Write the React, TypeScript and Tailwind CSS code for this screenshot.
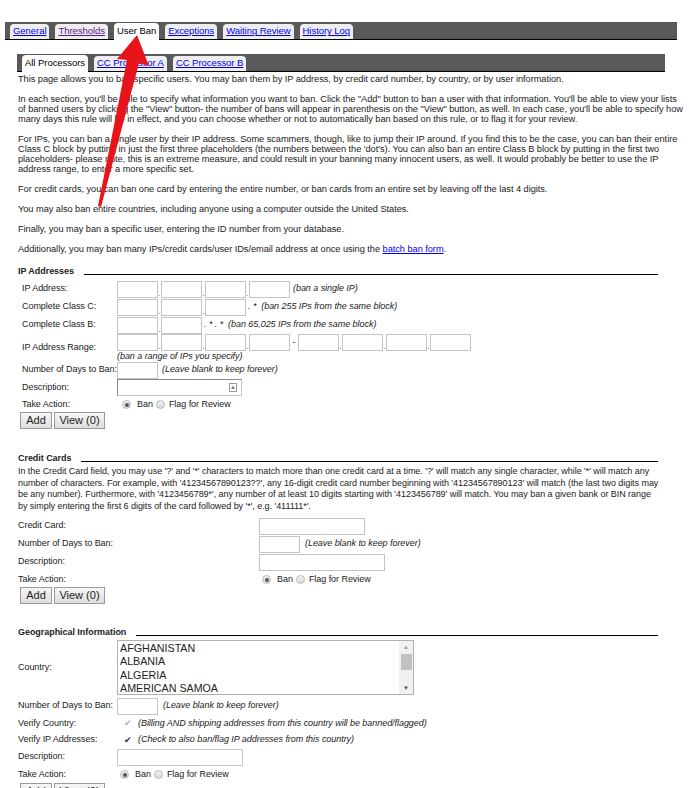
import React from 'react';

const FONT = { fontFamily: '"Liberation Sans", Arial, sans-serif' };

function Tab({ label, active, visited }: { label: string; active?: boolean; visited?: boolean }) {
  if (active) {
    return (
      <div className="h-[17px] -mb-px px-[3px] bg-white rounded-t-[4px] flex items-center text-[9.5px] text-black z-10">
        {label}
      </div>
    );
  }
  return (
    <div className="h-[15px] mt-[2px] px-[3px] bg-[#eeeeee] rounded-t-[4px] flex items-center text-[9.5px]">
      <span className={visited ? 'underline text-[#551a8b]' : 'underline text-[#0000ee]'}>{label}</span>
    </div>
  );
}

function Radio({ checked }: { checked?: boolean }) {
  return (
    <span className="inline-flex w-[9px] h-[9px] rounded-full border border-[#b8b8b8] bg-gradient-to-b from-[#f2f2f2] to-[#d8d8d8] items-center justify-center">
      {checked && <span className="w-[4px] h-[4px] rounded-full bg-[#555]" />}
    </span>
  );
}

function Check({ disabled }: { disabled?: boolean }) {
  return (
    <span
      className={`inline-flex w-[10px] h-[10px] items-center justify-center text-[9px] leading-none ${
        disabled ? 'text-[#b5b5b5]' : 'text-[#333]'
      }`}
    >
      ✔
    </span>
  );
}

function Box({ w, h = 17 }: { w: number; h?: number }) {
  return <span className="inline-block border border-[#c4c4c4] bg-white shrink-0" style={{ width: w, height: h }} />;
}

function Dot() {
  return <span className="w-[3px] text-center text-[7px] leading-none self-end mb-[1px]">.</span>;
}

function SectionHead({ title }: { title: string }) {
  return (
    <div className="flex items-end h-[11px] pr-[25px]">
      <span className="text-[9px] font-bold text-[#222] pr-[10px] leading-none">{title}</span>
      <div className="flex-1 border-b border-black mb-[1px]" />
    </div>
  );
}

function ActionRow({ label, labelW, gap }: { label: string; labelW: number; gap: number }) {
  return (
    <div className="flex items-center h-[17px]">
      <span className="shrink-0" style={{ width: labelW }}>{label}</span>
      <span className="flex items-center" style={{ marginLeft: gap }}>
        <Radio checked />
        <span className="ml-[6px] mr-[3px]">Ban</span>
        <Radio />
        <span className="ml-[4px]">Flag for Review</span>
      </span>
    </div>
  );
}

function Buttons() {
  return (
    <div className="flex gap-[2px] h-[17px]">
      <span className="w-[32px] border border-[#9a9a9a] bg-gradient-to-b from-[#f6f6f6] to-[#dedede] flex items-center justify-center text-[11px] tracking-normal text-[#222]">
        Add
      </span>
      <span className="w-[51px] border border-[#9a9a9a] bg-gradient-to-b from-[#f6f6f6] to-[#dedede] flex items-center justify-center text-[11px] tracking-normal text-[#222]">
        View (0)
      </span>
    </div>
  );
}

function IpGroup({ n }: { n: number }) {
  const boxes = [];
  for (let i = 0; i < n; i++) {
    boxes.push(<Box key={`b${i}`} w={41} />);
    if (i < n - 1) boxes.push(<Dot key={`d${i}`} />);
  }
  return <>{boxes}</>;
}

function IpSection() {
  return (
    <div className="mt-[11px]">
      <SectionHead title="IP Addresses" />
      <div className="pl-[4px] mt-[4px] whitespace-nowrap">
        <div className="flex items-center h-[18px]">
          <span className="w-[95px] shrink-0">IP Address:</span>
          <IpGroup n={4} />
          <span className="ml-[3px] italic">(ban a single IP)</span>
        </div>
        <div className="flex items-center h-[18px]">
          <span className="w-[95px] shrink-0">Complete Class C:</span>
          <IpGroup n={3} />
          <span className="ml-[2px] italic">. *&nbsp; (ban 255 IPs from the same block)</span>
        </div>
        <div className="flex items-center h-[18px]">
          <span className="w-[95px] shrink-0">Complete Class B:</span>
          <IpGroup n={2} />
          <span className="ml-[2px] italic">. * . *&nbsp; (ban 65,025 IPs from the same block)</span>
        </div>
        <div className="flex items-center h-[27px]">
          <span className="w-[95px] shrink-0">IP Address Range:</span>
          <div className="flex flex-col">
            <div className="flex h-[17px]">
              <IpGroup n={4} />
              <span className="w-[8px] text-center self-center">-</span>
              <IpGroup n={4} />
            </div>
            <span className="italic leading-[10px]">(ban a range of IPs you specify)</span>
          </div>
        </div>
        <div className="flex items-center h-[18px]">
          <span className="w-[95px] shrink-0">Number of Days to Ban:</span>
          <Box w={41} />
          <span className="ml-[4px] italic">(Leave blank to keep forever)</span>
        </div>
        <div className="flex items-center h-[17px]">
          <span className="w-[95px] shrink-0">Description:</span>
          <span className="relative inline-block w-[125px] h-[17px] border border-[#c4c4c4] border-t-[#888] border-l-[#888] bg-white">
            <span className="absolute right-[4px] top-[3px] w-[8px] h-[9px] border border-[#999] text-[6px] leading-[7px] text-center text-[#777]">▲</span>
          </span>
        </div>
        <ActionRow label="Take Action:" labelW={95} gap={5} />
      </div>
      <div className="pl-[2px] -mt-[1px]">
        <Buttons />
      </div>
    </div>
  );
}

function CardSection() {
  return (
    <div className="mt-[23px]">
      <SectionHead title="Credit Cards" />
      <p className="mt-[3px] leading-[11.5px] pr-[24px]">
        In the Credit Card field, you may use '?' and '*' characters to match more than one credit card at a time. '?' will match any single character, while '*' will match any number of characters. For example, with '41234567890123??', any 16-digit credit card number beginning with '41234567890123' will match (the last two digits may be any number). Furthermore, with '4123456789*', any number of at least 10 digits starting with '4123456789' will match. You may ban a given bank or BIN range by simply entering the first 6 digits of the card followed by '*', e.g. '411111*'.
      </p>
      <div className="mt-[5px] whitespace-nowrap">
        <div className="flex items-center h-[18px]">
          <span className="w-[241px] shrink-0">Credit Card:</span>
          <Box w={106} />
        </div>
        <div className="flex items-center h-[18px]">
          <span className="w-[241px] shrink-0">Number of Days to Ban:</span>
          <Box w={41} />
          <span className="ml-[5px] italic">(Leave blank to keep forever)</span>
        </div>
        <div className="flex items-center h-[18px]">
          <span className="w-[241px] shrink-0">Description:</span>
          <Box w={126} />
        </div>
        <ActionRow label="Take Action:" labelW={241} gap={3} />
        <div className="pl-[2px] -mt-[1px]">
          <Buttons />
        </div>
      </div>
    </div>
  );
}

const COUNTRIES = ['AFGHANISTAN', 'ALBANIA', 'ALGERIA', 'AMERICAN SAMOA'];

function GeoSection() {
  return (
    <div className="mt-[22px]">
      <SectionHead title="Geographical Information" />
      <div className="mt-[3px] whitespace-nowrap">
        <div className="flex items-center h-[55px]">
          <span className="w-[99px] shrink-0">Country:</span>
          <div className="w-[297px] h-[55px] border border-[#b0b0b0] bg-white flex">
            <div className="flex-1 pl-[2px] pt-[1px] text-[10.7px] tracking-normal leading-[13.3px] text-[#222]">
              {COUNTRIES.map((c) => (
                <div key={c}>{c}</div>
              ))}
            </div>
            <div className="w-[14px] bg-[#f1f1f1] flex flex-col items-center">
              <span className="text-[6px] text-[#a0a0a0] mt-[3px] leading-none">▲</span>
              <span className="w-[11px] h-[16px] bg-[#c1c1c1] mt-[4px]" />
              <span className="flex-1" />
              <span className="text-[6px] text-[#505050] mb-[3px] leading-none">▼</span>
            </div>
          </div>
        </div>
        <div className="flex items-center h-[18px] mt-[2px]">
          <span className="w-[99px] shrink-0">Number of Days to Ban:</span>
          <Box w={41} />
          <span className="ml-[5px] italic">(Leave blank to keep forever)</span>
        </div>
        <div className="flex items-center h-[17px]">
          <span className="w-[105px] shrink-0">Verify Country:</span>
          <Check disabled />
          <span className="ml-[5px] italic">(Billing AND shipping addresses from this country will be banned/flagged)</span>
        </div>
        <div className="flex items-center h-[16px]">
          <span className="w-[105px] shrink-0">Verify IP Addresses:</span>
          <Check />
          <span className="ml-[5px] italic">(Check to also ban/flag IP addresses from this country)</span>
        </div>
        <div className="flex items-center h-[18px]">
          <span className="w-[99px] shrink-0">Description:</span>
          <Box w={126} />
        </div>
        <ActionRow label="Take Action:" labelW={99} gap={3} />
        <div className="pl-[2px]">
          <Buttons />
        </div>
      </div>
    </div>
  );
}

function Arrow() {
  return (
    <svg className="absolute left-0 top-0 pointer-events-none z-20" width="689" height="788" viewBox="0 0 689 788">
      <polygon points="137,35 149,66 139,63 101,207 98,206 127,60 117,59" fill="#e8141c" />
    </svg>
  );
}

export default function App() {
  return (
    <div
      className="relative w-[689px] h-[788px] overflow-hidden bg-white text-[9px] tracking-[-0.05px] text-[#222]"
      style={FONT}
    >
      <div className="pt-[22px] pl-[5px] pr-[12px]">
        {/* main tabs */}
        <div className="h-[18px] bg-[#595959] border-b border-black flex items-end gap-[6px] pl-[5px]">
          <Tab label="General" />
          <Tab label="Thresholds" visited />
          <Tab label="User Ban" active />
          <Tab label="Exceptions" />
          <Tab label="Waiting Review" />
          <Tab label="History Log" />
        </div>
      </div>

      <div className="pl-[17px] pr-[24px] mt-[14px]">
        {/* processor tabs */}
        <div className="h-[18px] bg-[#595959] border-b border-black flex items-end gap-[6px] pl-[5px]">
          <Tab label="All Processors" active />
          <Tab label="CC Processor A" />
          <Tab label="CC Processor B" />
        </div>
      </div>

      <div className="pl-[18px] pr-[6px]">
        <div className="text-[9.25px] leading-[10px]">
          <p className="mt-[2px]">
            This page allows you to ban specific users. You may ban them by IP address, by credit card number, by country, or by user information.
          </p>
          <p className="mt-[10px]">
            In each section, you'll be able to specify what information you want to ban. Click the "Add" button to ban a user with that information. You'll be able to view your lists of banned users by clicking the "View" button- the number of bans will appear in parenthesis on the "View" button, as well. In each case, you'll be able to specify how many days this rule will be in effect, and you can choose whether or not to automatically ban based on this rule, or to flag it for your review.
          </p>
          <p className="mt-[10px]">
            For IPs, you can ban a single user by their IP address. Some scammers, though, like to jump their IP around. If you find this to be the case, you can ban their entire Class C block by putting in just the first three placeholders (the numbers between the 'dot's). You can also ban an entire Class B block by putting in the first two placeholders- please note, this is an extreme measure, and could result in your banning many innocent users, as well. It would probably be better to use the IP address range, to enter a more specific set.
          </p>
          <p className="mt-[10px]">
            For credit cards, you can ban one card by entering the entire number, or ban cards from an entire set by leaving off the last 4 digits.
          </p>
          <p className="mt-[10px]">You may also ban entire countries, including anyone using a computer outside the United States.</p>
          <p className="mt-[10px]">Finally, you may ban a specific user, entering the ID number from your database.</p>
          <p className="mt-[10px]">
            Additionally, you may ban many IPs/credit cards/user IDs/email address at once using the{' '}
            <span className="underline text-[#0000ee]">batch ban form</span>.
          </p>
        </div>

        <IpSection />
        <CardSection />
        <GeoSection />
      </div>

      <Arrow />
    </div>
  );
}
